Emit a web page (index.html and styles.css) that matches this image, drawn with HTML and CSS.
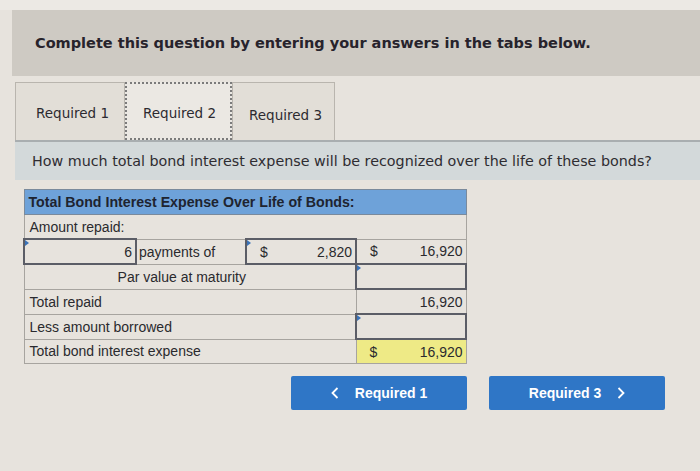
FILE: index.html
```html
<!DOCTYPE html>
<html>
<head>
<meta charset="utf-8">
<link rel="stylesheet" href="styles.css">
</head>
<body>
<div class="page">
  <div class="banner">Complete this question by entering your answers in the tabs below.</div>
  <div class="tabs">
    <div class="tab">Required 1</div>
    <div class="tab active">Required 2</div>
    <div class="tab">Required 3</div>
  </div>
  <div class="question">How much total bond interest expense will be recognized over the life of these bonds?</div>
  <table class="grid">
    <colgroup><col class="c1"><col class="c2"><col class="c3"><col class="c4"></colgroup>
    <tr class="head"><td colspan="4">Total Bond Interest Expense Over Life of Bonds:</td></tr>
    <tr><td colspan="4" class="lbl">Amount repaid:</td></tr>
    <tr>
      <td class="inp num flag">6</td>
      <td class="txt">payments of</td>
      <td class="inp flag"><span class="money"><span>$</span><span>2,820</span></span></td>
      <td class="out"><span class="money"><span>$</span><span>16,920</span></span></td>
    </tr>
    <tr>
      <td colspan="2" class="par">Par value at maturity</td>
      <td class="blank"></td>
      <td class="inp flag"></td>
    </tr>
    <tr><td colspan="3" class="lbl">Total repaid</td><td class="out num">16,920</td></tr>
    <tr><td colspan="3" class="lbl">Less amount borrowed</td><td class="inp flag"></td></tr>
    <tr><td colspan="3" class="lbl">Total bond interest expense</td><td class="yellow"><span class="money"><span>$</span><span>16,920</span></span></td></tr>
  </table>
  <div class="nav">
    <button class="btn"><svg class="chev" width="8" height="12" viewBox="0 0 8 12"><path d="M6.5 1 L1.5 6 L6.5 11" fill="none" stroke="#fff" stroke-width="1.8"/></svg>Required 1</button>
    <button class="btn">Required 3<svg class="chev" width="8" height="12" viewBox="0 0 8 12"><path d="M1.5 1 L6.5 6 L1.5 11" fill="none" stroke="#fff" stroke-width="1.8"/></svg></button>
  </div>
</div>
</body>
</html>
```

FILE: styles.css
```css
html, body {
  margin: 0;
  padding: 0;
  background: #e7e3dd;
}
.page {
  width: 700px;
  height: 471px;
  padding-top: 10px;
  box-sizing: border-box;
  background: linear-gradient(#ece9e4 0, #ece9e4 10px, #e7e3dd 10px);
  font-family: "DejaVu Sans", Verdana, sans-serif;
  color: #2c2a30;
  overflow: hidden;
}
.banner {
  margin-left: 12px;
  height: 66px;
  background: #cecac3;
  font-weight: bold;
  font-size: 14.5px;
  padding-left: 23px;
  display: flex;
  align-items: center;
  color: #27232c;
}
.tabs {
  display: flex;
  margin: 6px 0 0 15px;
  height: 58px;
}
.tab {
  width: 110px;
  box-sizing: border-box;
  border: 1px solid #b9b5ae;
  border-bottom: none;
  background: #e2ded7;
  font-size: 13.5px;
  display: flex;
  align-items: center;
  padding-left: 20px;
  padding-top: 2px;
}
.tab.active {
  width: 107px;
  background: #ebe8e3;
  border: 2px dotted #7b7b7b;
  padding-left: 16px;
  padding-top: 4px;
}
.tab:last-child {
  width: 103px;
  padding-left: 16px;
  padding-top: 6px;
}
.question {
  margin-left: 15px;
  height: 38px;
  border-top: 2px solid #a9aeb0;
  background: #d3d9da;
  font-size: 14.3px;
  display: flex;
  align-items: center;
  padding-left: 17px;
  color: #2e2c31;
}
.grid {
  margin: 9px 0 0 23px;
  border-collapse: collapse;
  table-layout: fixed;
  width: 442px;
  font-family: "Liberation Sans", Arial, sans-serif;
  font-size: 14px;
  color: #2a2a2e;
}
.c1 { width: 112px; }
.c2 { width: 110px; }
.c3 { width: 110px; }
.c4 { width: 110px; }
.grid td {
  border: 1px solid #a7a49f;
  height: 23px;
  padding: 0 3px;
  white-space: nowrap;
  position: relative;
}
.grid tr.head td {
  background: #6ea2d9;
  font-weight: bold;
  color: #1e2430;
  border-color: #7a8a9c;
  height: 24px;
  padding-left: 4px;
  font-size: 14.2px;
}
.grid td.lbl { padding-left: 5px; }
.grid td.inp {
  border: 2px solid #5b5d66;
}
.grid td.num { text-align: right; }
.grid td.txt { padding-left: 2px; }
.grid td.par {
  text-align: right;
  padding-right: 0;
  border-right: none;
}
.grid td.blank {
  border-left: none;
  border-right: none;
}
.grid td.flag::before {
  content: "";
  position: absolute;
  left: 0;
  top: 0;
  border-left: 4px solid #3a73b8;
  border-top: 3px solid transparent;
  border-bottom: 3px solid transparent;
}
.money {
  display: flex;
  justify-content: space-between;
  padding-left: 10px;
}
.grid td.yellow {
  background: #eeea86;
  border: 1px solid #a7a49f;
}
.nav {
  display: flex;
  gap: 22px;
  margin: 12px 0 0 291px;
}
.btn {
  width: 176px;
  height: 34px;
  background: #2f76c6;
  border: none;
  border-radius: 2px;
  color: #ffffff;
  font-family: "Liberation Sans", Arial, sans-serif;
  font-weight: bold;
  font-size: 14px;
  display: flex;
  align-items: center;
  justify-content: center;
  gap: 16px;
  padding: 0;
}
.chev {
  display: block;
}
```
